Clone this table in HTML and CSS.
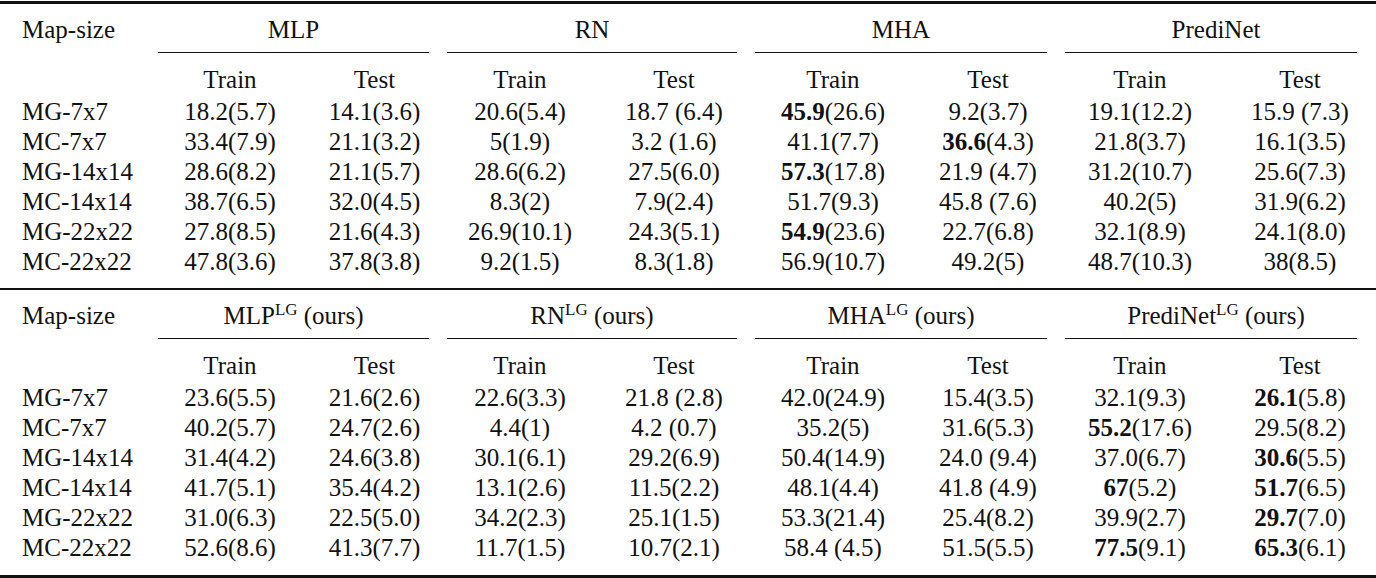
FILE: index.html
```html
<!DOCTYPE html>
<html lang="en">
<head>
<meta charset="utf-8">
<title>Results table</title>
<link rel="stylesheet" href="styles.css">
</head>
<body>
<div class="tbl">
  <div class="rule heavy top"></div>
  <div class="block upper">
    <div class="c lbl">Map-size</div>
    <div class="c grp">MLP</div>
    <div class="c grp">RN</div>
    <div class="c grp">MHA</div>
    <div class="c grp">PrediNet</div>

    <div class="cmid first"></div>
    <div class="cmid"></div>
    <div class="cmid"></div>
    <div class="cmid last"></div>

    <div class="c sub"></div>
    <div class="c sub">Train</div><div class="c sub">Test</div>
    <div class="c sub">Train</div><div class="c sub">Test</div>
    <div class="c sub">Train</div><div class="c sub">Test</div>
    <div class="c sub">Train</div><div class="c sub">Test</div>

    <div class="c lbl">MG-7x7</div>
    <div class="c">18.2(5.7)</div><div class="c">14.1(3.6)</div>
    <div class="c">20.6(5.4)</div><div class="c">18.7 (6.4)</div>
    <div class="c"><b>45.9</b>(26.6)</div><div class="c">9.2(3.7)</div>
    <div class="c">19.1(12.2)</div><div class="c">15.9 (7.3)</div>

    <div class="c lbl">MC-7x7</div>
    <div class="c">33.4(7.9)</div><div class="c">21.1(3.2)</div>
    <div class="c">5(1.9)</div><div class="c">3.2 (1.6)</div>
    <div class="c">41.1(7.7)</div><div class="c"><b>36.6</b>(4.3)</div>
    <div class="c">21.8(3.7)</div><div class="c">16.1(3.5)</div>

    <div class="c lbl">MG-14x14</div>
    <div class="c">28.6(8.2)</div><div class="c">21.1(5.7)</div>
    <div class="c">28.6(6.2)</div><div class="c">27.5(6.0)</div>
    <div class="c"><b>57.3</b>(17.8)</div><div class="c">21.9 (4.7)</div>
    <div class="c">31.2(10.7)</div><div class="c">25.6(7.3)</div>

    <div class="c lbl">MC-14x14</div>
    <div class="c">38.7(6.5)</div><div class="c">32.0(4.5)</div>
    <div class="c">8.3(2)</div><div class="c">7.9(2.4)</div>
    <div class="c">51.7(9.3)</div><div class="c">45.8 (7.6)</div>
    <div class="c">40.2(5)</div><div class="c">31.9(6.2)</div>

    <div class="c lbl">MG-22x22</div>
    <div class="c">27.8(8.5)</div><div class="c">21.6(4.3)</div>
    <div class="c">26.9(10.1)</div><div class="c">24.3(5.1)</div>
    <div class="c"><b>54.9</b>(23.6)</div><div class="c">22.7(6.8)</div>
    <div class="c">32.1(8.9)</div><div class="c">24.1(8.0)</div>

    <div class="c lbl">MC-22x22</div>
    <div class="c">47.8(3.6)</div><div class="c">37.8(3.8)</div>
    <div class="c">9.2(1.5)</div><div class="c">8.3(1.8)</div>
    <div class="c">56.9(10.7)</div><div class="c">49.2(5)</div>
    <div class="c">48.7(10.3)</div><div class="c">38(8.5)</div>
  </div>

  <div class="rule mid"></div>

  <div class="block">
    <div class="c lbl">Map-size</div>
    <div class="c grp">MLP<span class="sup">LG</span> (ours)</div>
    <div class="c grp">RN<span class="sup">LG</span> (ours)</div>
    <div class="c grp">MHA<span class="sup">LG</span> (ours)</div>
    <div class="c grp">PrediNet<span class="sup">LG</span> (ours)</div>

    <div class="cmid first"></div>
    <div class="cmid"></div>
    <div class="cmid"></div>
    <div class="cmid last"></div>

    <div class="c sub"></div>
    <div class="c sub">Train</div><div class="c sub">Test</div>
    <div class="c sub">Train</div><div class="c sub">Test</div>
    <div class="c sub">Train</div><div class="c sub">Test</div>
    <div class="c sub">Train</div><div class="c sub">Test</div>

    <div class="c lbl">MG-7x7</div>
    <div class="c">23.6(5.5)</div><div class="c">21.6(2.6)</div>
    <div class="c">22.6(3.3)</div><div class="c">21.8 (2.8)</div>
    <div class="c">42.0(24.9)</div><div class="c">15.4(3.5)</div>
    <div class="c">32.1(9.3)</div><div class="c"><b>26.1</b>(5.8)</div>

    <div class="c lbl">MC-7x7</div>
    <div class="c">40.2(5.7)</div><div class="c">24.7(2.6)</div>
    <div class="c">4.4(1)</div><div class="c">4.2 (0.7)</div>
    <div class="c">35.2(5)</div><div class="c">31.6(5.3)</div>
    <div class="c"><b>55.2</b>(17.6)</div><div class="c">29.5(8.2)</div>

    <div class="c lbl">MG-14x14</div>
    <div class="c">31.4(4.2)</div><div class="c">24.6(3.8)</div>
    <div class="c">30.1(6.1)</div><div class="c">29.2(6.9)</div>
    <div class="c">50.4(14.9)</div><div class="c">24.0 (9.4)</div>
    <div class="c">37.0(6.7)</div><div class="c"><b>30.6</b>(5.5)</div>

    <div class="c lbl">MC-14x14</div>
    <div class="c">41.7(5.1)</div><div class="c">35.4(4.2)</div>
    <div class="c">13.1(2.6)</div><div class="c">11.5(2.2)</div>
    <div class="c">48.1(4.4)</div><div class="c">41.8 (4.9)</div>
    <div class="c"><b>67</b>(5.2)</div><div class="c"><b>51.7</b>(6.5)</div>

    <div class="c lbl">MG-22x22</div>
    <div class="c">31.0(6.3)</div><div class="c">22.5(5.0)</div>
    <div class="c">34.2(2.3)</div><div class="c">25.1(1.5)</div>
    <div class="c">53.3(21.4)</div><div class="c">25.4(8.2)</div>
    <div class="c">39.9(2.7)</div><div class="c"><b>29.7</b>(7.0)</div>

    <div class="c lbl">MC-22x22</div>
    <div class="c">52.6(8.6)</div><div class="c">41.3(7.7)</div>
    <div class="c">11.7(1.5)</div><div class="c">10.7(2.1)</div>
    <div class="c">58.4 (4.5)</div><div class="c">51.5(5.5)</div>
    <div class="c"><b>77.5</b>(9.1)</div><div class="c"><b>65.3</b>(6.1)</div>
  </div>

  <div class="rule heavy bottom"></div>
</div>
</body>
</html>
```

FILE: styles.css
```css
html, body {
  margin: 0;
  padding: 0;
  background: #ffffff;
}

.tbl {
  width: 1376px;
  font-family: "Liberation Serif", "Times New Roman", serif;
  font-size: 25px;
  color: #111111;
}

.rule {
  background: #111111;
  width: 100%;
}

.rule.heavy { height: 3px; }
.rule.top { margin-top: 1px; }
.rule.mid { height: 2px; margin: 11px 0 11px 0; }
.rule.bottom { margin-top: 12px; }

.block {
  display: grid;
  grid-template-columns: 149px 162px 127px 164px 144px 174px 136px 168px 152px;
}

.block.upper {
  margin-top: 11px;
}

.c {
  height: 30px;
  line-height: 30px;
  text-align: center;
  white-space: nowrap;
}

.c.lbl {
  text-align: left;
  padding-left: 22px;
}

.c.grp {
  grid-column: span 2;
}

.c.sub {
  margin-bottom: 2px;
}

.cmid {
  grid-column: span 2;
  height: 1px;
  background: #111111;
  margin: 7px 9px 12px 9px;
}

.cmid.first {
  grid-column: 2 / span 2;
}

.cmid.last {
  margin-right: 19px;
}

.sup {
  font-size: 17px;
  vertical-align: 9px;
  line-height: 0;
}

b {
  font-weight: bold;
}
```
